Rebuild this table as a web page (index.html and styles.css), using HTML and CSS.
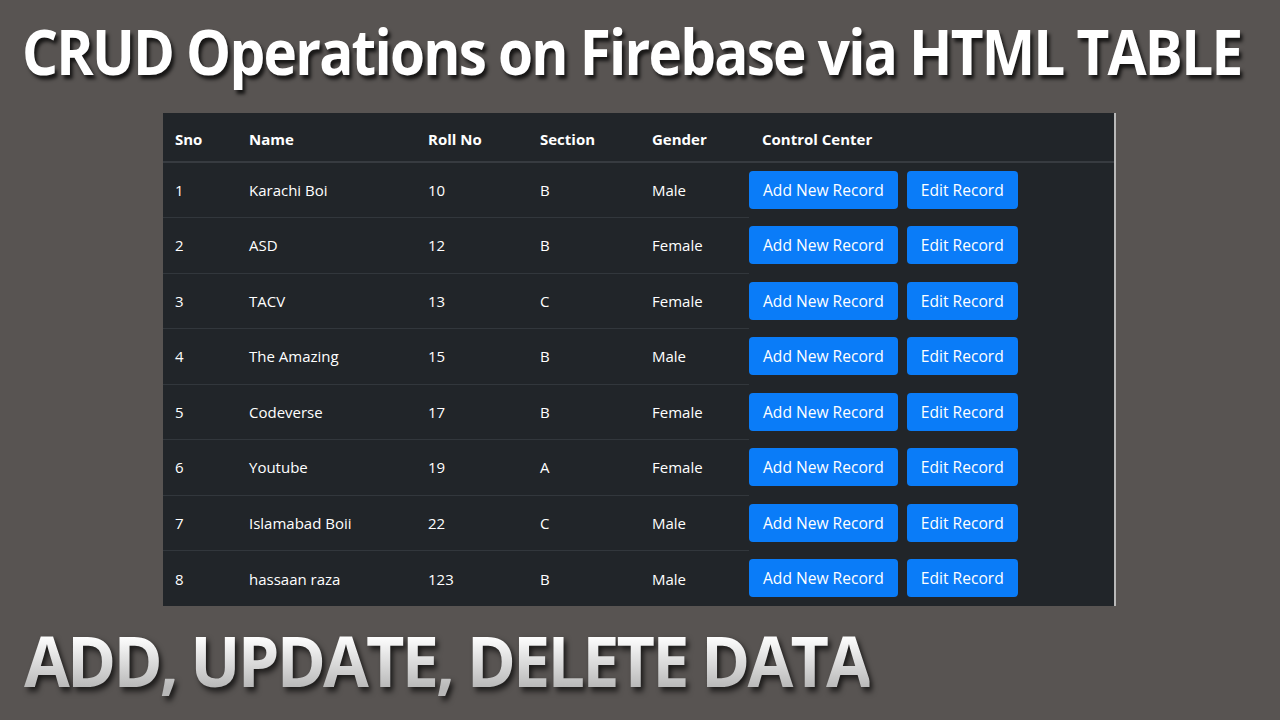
FILE: index.html
```html
<!DOCTYPE html>
<html lang="en">
<head>
<meta charset="utf-8">
<title>CRUD Operations on Firebase via HTML TABLE</title>
<link rel="stylesheet" href="styles.css">
</head>
<body>
<div class="page">
  <h1 class="title">CRUD Operations on Firebase via HTML TABLE</h1>
  <div class="table-wrap">
    <table class="records">
      <colgroup>
        <col class="c-sno"><col class="c-name"><col class="c-roll"><col class="c-sec"><col class="c-gen"><col class="c-ctl">
      </colgroup>
      <thead>
        <tr><th>Sno</th><th>Name</th><th>Roll No</th><th>Section</th><th>Gender</th><th class="ctl-head">Control Center</th></tr>
      </thead>
      <tbody>
        <tr><td>1</td><td>Karachi Boi</td><td>10</td><td>B</td><td>Male</td><td class="ctl"><button class="btn">Add New Record</button><button class="btn">Edit Record</button></td></tr>
        <tr><td>2</td><td>ASD</td><td>12</td><td>B</td><td>Female</td><td class="ctl"><button class="btn">Add New Record</button><button class="btn">Edit Record</button></td></tr>
        <tr><td>3</td><td>TACV</td><td>13</td><td>C</td><td>Female</td><td class="ctl"><button class="btn">Add New Record</button><button class="btn">Edit Record</button></td></tr>
        <tr><td>4</td><td>The Amazing</td><td>15</td><td>B</td><td>Male</td><td class="ctl"><button class="btn">Add New Record</button><button class="btn">Edit Record</button></td></tr>
        <tr><td>5</td><td>Codeverse</td><td>17</td><td>B</td><td>Female</td><td class="ctl"><button class="btn">Add New Record</button><button class="btn">Edit Record</button></td></tr>
        <tr><td>6</td><td>Youtube</td><td>19</td><td>A</td><td>Female</td><td class="ctl"><button class="btn">Add New Record</button><button class="btn">Edit Record</button></td></tr>
        <tr><td>7</td><td>Islamabad Boii</td><td>22</td><td>C</td><td>Male</td><td class="ctl"><button class="btn">Add New Record</button><button class="btn">Edit Record</button></td></tr>
        <tr><td>8</td><td>hassaan raza</td><td>123</td><td>B</td><td>Male</td><td class="ctl"><button class="btn">Add New Record</button><button class="btn">Edit Record</button></td></tr>
      </tbody>
    </table>
  </div>
  <h2 class="subtitle">ADD, UPDATE, DELETE DATA</h2>
</div>
</body>
</html>
```
FILE: styles.css
```css
* { box-sizing: border-box; }
html, body { margin: 0; padding: 0; }
body {
  width: 1280px;
  height: 720px;
  overflow: hidden;
  background: #585452;
  font-family: "Open Sans", "Noto Sans", sans-serif;
}
.page {
  display: flex;
  flex-direction: column;
  height: 720px;
}
.title {
  margin: 14px 0 0 22px;
  font-family: "Open Sans", sans-serif;
  font-weight: 700;
  font-size: 63px;
  line-height: 74px;
  color: #ffffff;
  letter-spacing: -2px;
  white-space: nowrap;
  transform-origin: left center;
  transform: scaleX(0.9);
  text-shadow: 3px 4px 4px rgba(0,0,0,0.75);
}
.table-wrap {
  margin: 25px 0 0 163px;
  width: 953px;
  background: #212529;
  border-right: 2px solid #b9b9b9;
}
.records {
  width: 951px;
  border-collapse: collapse;
  table-layout: fixed;
  color: #ffffff;
  font-size: 15px;
}
.c-sno { width: 74px; }
.c-name { width: 179px; }
.c-roll { width: 112px; }
.c-sec { width: 112px; }
.c-gen { width: 109px; }
.c-ctl { width: 365px; }
.records th {
  height: 49px;
  text-align: left;
  font-weight: 700;
  padding: 4px 12px 0;
  border-bottom: 2px solid #373b40;
}
.records th.ctl-head { padding-left: 13px; }
.records td {
  height: 55.5px;
  padding: 0 12px;
  border-top: 1px solid #32373c;
}
.records tbody tr:first-child td { border-top: none; }
.records td.ctl {
  padding: 0;
  border-top: none;
}
.btn {
  display: inline-block;
  height: 38px;
  padding: 0 14px;
  margin-right: 9px;
  border: none;
  border-radius: 4px;
  background: #0a7cf8;
  color: #ffffff;
  font-family: "Open Sans", "Noto Sans", sans-serif;
  font-size: 15.6px;
  vertical-align: middle;
}
.subtitle {
  margin: 14px 0 0 24px;
  font-family: "Open Sans", sans-serif;
  font-weight: 700;
  font-size: 70px;
  line-height: 80px;
  letter-spacing: -3px;
  white-space: nowrap;
  transform-origin: left center;
  transform: scaleX(0.95);
  background: linear-gradient(to bottom, #ffffff 20%, #b8b8b8 85%);
  -webkit-background-clip: text;
  background-clip: text;
  color: transparent;
  width: fit-content;
  filter: drop-shadow(3px 4px 3px rgba(0,0,0,0.7));
}
```
